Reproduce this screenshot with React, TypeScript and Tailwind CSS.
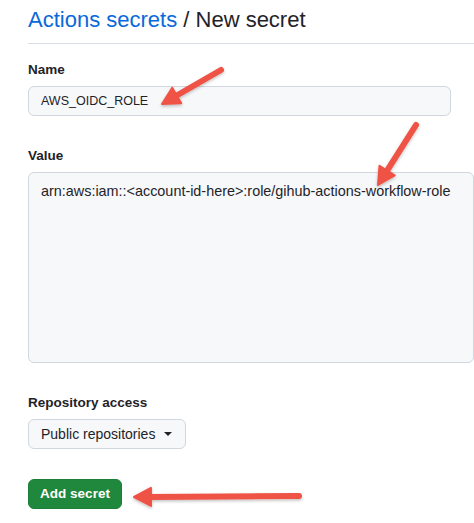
import React from 'react';

type Pt = [number, number];

function Arrow({ from, to }: { from: Pt; to: Pt }) {
  // tail -> tip, with a filled triangular head
  const dx = to[0] - from[0];
  const dy = to[1] - from[1];
  const len = Math.hypot(dx, dy);
  const ux = dx / len;
  const uy = dy / len;
  const headLen = 17;
  const halfW = 9;
  const bx = to[0] - ux * headLen;
  const by = to[1] - uy * headLen;
  const px = -uy;
  const py = ux;
  const head = `${to[0]},${to[1]} ${bx + px * halfW},${by + py * halfW} ${bx - px * halfW},${by - py * halfW}`;
  return (
    <g filter="url(#shadow)">
      <line x1={from[0]} y1={from[1]} x2={bx + ux * 3} y2={by + uy * 3} stroke="#ef5245" strokeWidth={6} strokeLinecap="round" />
      <polygon points={head} fill="#ef5245" stroke="#ef5245" strokeWidth={2} strokeLinejoin="round" />
    </g>
  );
}

export default function App() {
  return (
    <div className="relative w-[474px] h-[523px] overflow-hidden bg-white font-['Liberation_Sans',Arial,sans-serif] text-[#1f2328]">
      <div className="pl-[28px]">
        {/* Header */}
        <div className="pt-[6px] pb-[9px] border-b border-[#d8dee4] text-[22px] leading-[28px]">
          <span className="text-[#0969da]">Actions secrets</span>
          <span> / New secret</span>
        </div>

        {/* Name */}
        <div className="mt-[16px] text-[13.5px] font-bold leading-[20px]">Name</div>
        <div className="mt-[6px] w-[423px] h-[30px] rounded-md border border-[#d0d7de] bg-[#f6f8fa] px-[12px] flex items-center text-[12.5px]">
          AWS_OIDC_ROLE
        </div>

        {/* Value */}
        <div className="mt-[30px] text-[13.5px] font-bold leading-[20px]">Value</div>
        <div className="mt-[6px] w-[446px] h-[191px] rounded-md border border-[#d0d7de] bg-[#f6f8fa] px-[12px] pt-[8px] text-[14.4px] leading-[20px] whitespace-nowrap">
          arn:aws:iam::&lt;account-id-here&gt;:role/gihub-actions-workflow-role
        </div>

        {/* Repository access */}
        <div className="mt-[30px] text-[13.5px] font-bold leading-[20px]">Repository access</div>
        <div className="mt-[6px] w-[158px] h-[30px] rounded-md border border-[#d0d7de] bg-[#f6f8fa] pl-[12px] flex items-center gap-[9px] text-[14px]">
          <span>Public repositories</span>
          <span className="w-0 h-0 border-x-[4px] border-x-transparent border-t-[4px] border-t-[#1f2328]" />
        </div>

        {/* Submit */}
        <div className="mt-[30px] w-[94px] h-[30px] rounded-md bg-[#1f883d] border border-[#1a7f37] flex items-center justify-center text-white text-[13.5px] font-bold">
          Add secret
        </div>
      </div>

      {/* Annotation arrows */}
      <svg className="absolute inset-0 pointer-events-none" width={474} height={523} viewBox="0 0 474 523">
        <defs>
          <filter id="shadow" x="-20%" y="-20%" width="140%" height="140%">
            <feDropShadow dx="0" dy="1.5" stdDeviation="1.5" floodColor="#000" floodOpacity="0.25" />
          </filter>
        </defs>
        <Arrow from={[221, 70]} to={[162, 104]} />
        <Arrow from={[416, 125]} to={[378, 185]} />
        <Arrow from={[299, 496]} to={[134, 497]} />
      </svg>
    </div>
  );
}
